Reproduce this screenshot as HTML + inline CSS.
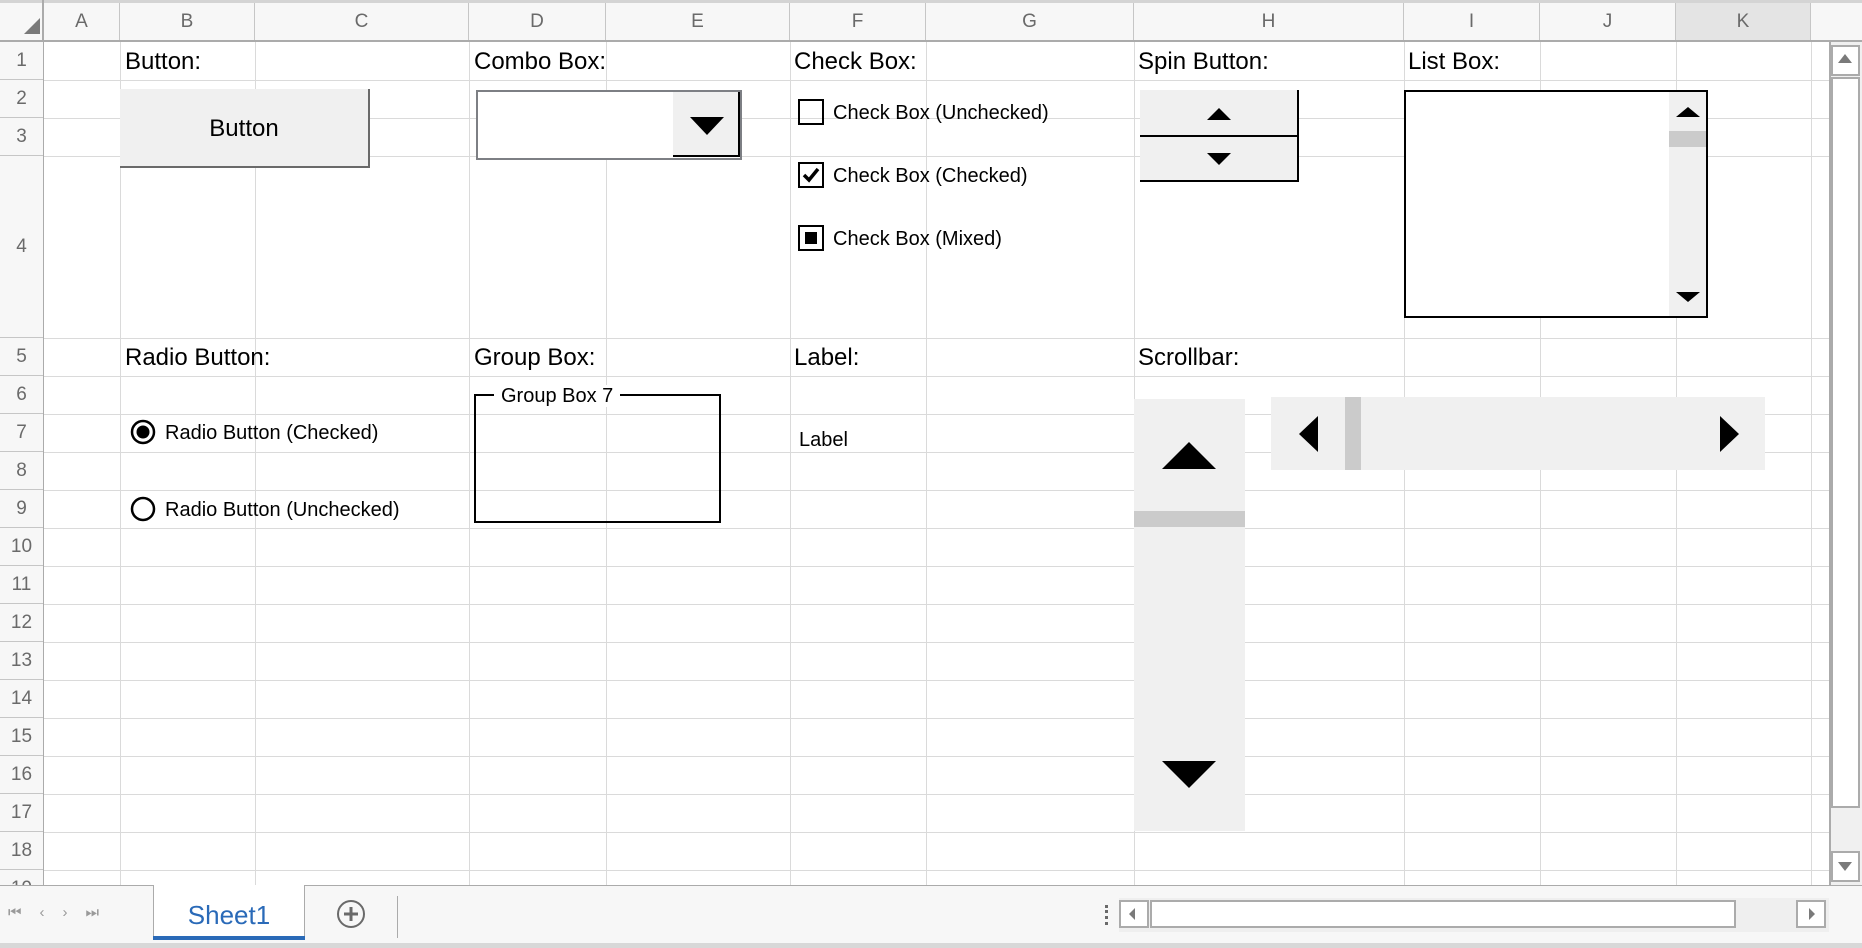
<!DOCTYPE html>
<html><head><meta charset="utf-8"><style>
*{margin:0;padding:0;box-sizing:border-box}
body{width:1862px;height:948px;position:relative;background:#fff;font-family:"Liberation Sans",sans-serif;overflow:hidden}
.a{position:absolute}
.v{position:absolute;top:42px;width:1px;height:843px;background:#dadada}
.h{position:absolute;left:44px;height:1px;width:1785px;background:#dadada}
.ch{position:absolute;top:0;height:41px;background:#f7f7f7;border-right:1px solid #c6c6c6;color:#6a6a6a;font-size:19px;text-align:center;line-height:44px}
.rh{position:absolute;left:0;width:43px;background:#f7f7f7;border-bottom:1px solid #c6c6c6;color:#6a6a6a;font-size:19px;text-align:center}
.lbl{position:absolute;font-size:24px;color:#000;line-height:26px}
.t{position:absolute;font-size:20px;color:#000;line-height:22px}
.tri{position:absolute;width:0;height:0}
</style></head><body>
<div class="v" style="left:120px"></div><div class="v" style="left:255px"></div><div class="v" style="left:469px"></div><div class="v" style="left:606px"></div><div class="v" style="left:790px"></div><div class="v" style="left:926px"></div><div class="v" style="left:1134px"></div><div class="v" style="left:1404px"></div><div class="v" style="left:1540px"></div><div class="v" style="left:1676px"></div><div class="v" style="left:1811px"></div>
<div class="h" style="top:80px"></div><div class="h" style="top:118px"></div><div class="h" style="top:156px"></div><div class="h" style="top:338px"></div><div class="h" style="top:376px"></div><div class="h" style="top:414px"></div><div class="h" style="top:452px"></div><div class="h" style="top:490px"></div><div class="h" style="top:528px"></div><div class="h" style="top:566px"></div><div class="h" style="top:604px"></div><div class="h" style="top:642px"></div><div class="h" style="top:680px"></div><div class="h" style="top:718px"></div><div class="h" style="top:756px"></div><div class="h" style="top:794px"></div><div class="h" style="top:832px"></div><div class="h" style="top:870px"></div>
<div class="a" style="left:0;top:0;width:1862px;height:3px;background:#d4d4d4"></div>
<div class="ch" style="left:0;width:44px;top:3px;height:38px"></div>
<div class="tri" style="left:24px;top:18px;border-left:16px solid transparent;border-bottom:16px solid #7a7a7a"></div>
<div class="ch" style="left:44px;width:76px;top:3px;height:38px;line-height:38px">A</div>
<div class="ch" style="left:120px;width:135px;top:3px;height:38px;line-height:38px">B</div>
<div class="ch" style="left:255px;width:214px;top:3px;height:38px;line-height:38px">C</div>
<div class="ch" style="left:469px;width:137px;top:3px;height:38px;line-height:38px">D</div>
<div class="ch" style="left:606px;width:184px;top:3px;height:38px;line-height:38px">E</div>
<div class="ch" style="left:790px;width:136px;top:3px;height:38px;line-height:38px">F</div>
<div class="ch" style="left:926px;width:208px;top:3px;height:38px;line-height:38px">G</div>
<div class="ch" style="left:1134px;width:270px;top:3px;height:38px;line-height:38px">H</div>
<div class="ch" style="left:1404px;width:136px;top:3px;height:38px;line-height:38px">I</div>
<div class="ch" style="left:1540px;width:136px;top:3px;height:38px;line-height:38px">J</div>
<div class="ch" style="left:1676px;width:135px;top:3px;height:38px;line-height:38px;background:#e4e4e4">K</div>
<div class="ch" style="left:1811px;width:51px;top:3px;height:38px;border-right:none"></div>
<div class="a" style="left:0;top:40px;width:1862px;height:2px;background:#ababab"></div>
<div class="a" style="left:42px;top:0;width:2px;height:885px;background:#ababab"></div>
<div class="rh" style="top:42px;height:38px;line-height:38px">1</div>
<div class="rh" style="top:80px;height:38px;line-height:38px">2</div>
<div class="rh" style="top:118px;height:38px;line-height:38px">3</div>
<div class="rh" style="top:156px;height:182px;line-height:182px">4</div>
<div class="rh" style="top:338px;height:38px;line-height:38px">5</div>
<div class="rh" style="top:376px;height:38px;line-height:38px">6</div>
<div class="rh" style="top:414px;height:38px;line-height:38px">7</div>
<div class="rh" style="top:452px;height:38px;line-height:38px">8</div>
<div class="rh" style="top:490px;height:38px;line-height:38px">9</div>
<div class="rh" style="top:528px;height:38px;line-height:38px">10</div>
<div class="rh" style="top:566px;height:38px;line-height:38px">11</div>
<div class="rh" style="top:604px;height:38px;line-height:38px">12</div>
<div class="rh" style="top:642px;height:38px;line-height:38px">13</div>
<div class="rh" style="top:680px;height:38px;line-height:38px">14</div>
<div class="rh" style="top:718px;height:38px;line-height:38px">15</div>
<div class="rh" style="top:756px;height:38px;line-height:38px">16</div>
<div class="rh" style="top:794px;height:38px;line-height:38px">17</div>
<div class="rh" style="top:832px;height:38px;line-height:38px">18</div>
<div class="rh" style="top:870px;height:38px;line-height:38px">19</div>
<div class="lbl" style="left:125px;top:49px">Button:</div>
<div class="lbl" style="left:474px;top:49px">Combo Box:</div>
<div class="lbl" style="left:794px;top:49px">Check Box:</div>
<div class="lbl" style="left:1138px;top:49px">Spin Button:</div>
<div class="lbl" style="left:1408px;top:49px">List Box:</div>
<div class="lbl" style="left:125px;top:345px">Radio Button:</div>
<div class="lbl" style="left:474px;top:345px">Group Box:</div>
<div class="lbl" style="left:794px;top:345px">Label:</div>
<div class="lbl" style="left:1138px;top:345px">Scrollbar:</div>
<div class="a" style="left:120px;top:89px;width:250px;height:79px;background:#f0f0f0;border-right:2px solid #6a6a6a;border-bottom:2px solid #6a6a6a;font-size:24px;text-align:center;line-height:80px">Button</div>
<div class="a" style="left:476px;top:90px;width:266px;height:70px;background:#fff;border:2px solid #7d7f84"></div>
<div class="a" style="left:673px;top:92px;width:67px;height:65px;background:#f0f0f0;border-bottom:2px solid #000;border-right:2px solid #000"></div>
<div class="tri" style="left:690px;top:117px;border-left:17px solid transparent;border-right:17px solid transparent;border-top:18px solid #000"></div>
<div class="a" style="left:798px;top:99px;width:26px;height:26px;border:2px solid #000"></div>
<div class="t" style="left:833px;top:102px">Check Box (Unchecked)</div>
<div class="a" style="left:798px;top:162px;width:26px;height:26px;border:2px solid #000"></div>
<svg class="a" style="left:798px;top:162px" width="26" height="26"><path d="M6 13 L11 18 L20 7" stroke="#000" stroke-width="3.5" fill="none"/></svg>
<div class="t" style="left:833px;top:165px">Check Box (Checked)</div>
<div class="a" style="left:798px;top:225px;width:26px;height:26px;border:2px solid #000"></div>
<div class="a" style="left:805px;top:232px;width:12px;height:12px;background:#000"></div>
<div class="t" style="left:833px;top:228px">Check Box (Mixed)</div>
<div class="a" style="left:1140px;top:90px;width:159px;height:92px;background:#f0f0f0;border-right:2px solid #000;border-bottom:2px solid #000"></div>
<div class="a" style="left:1140px;top:135px;width:159px;height:2px;background:#000"></div>
<div class="tri" style="left:1207px;top:108px;border-left:12px solid transparent;border-right:12px solid transparent;border-bottom:12px solid #000"></div>
<div class="tri" style="left:1207px;top:153px;border-left:12px solid transparent;border-right:12px solid transparent;border-top:12px solid #000"></div>
<div class="a" style="left:1404px;top:90px;width:304px;height:228px;border:2px solid #000;background:#fff"></div>
<div class="a" style="left:1669px;top:92px;width:37px;height:224px;background:#f0f0f0"></div>
<div class="a" style="left:1669px;top:131px;width:37px;height:16px;background:#cbcbcb"></div>
<div class="tri" style="left:1676px;top:107px;border-left:12px solid transparent;border-right:12px solid transparent;border-bottom:10px solid #000"></div>
<div class="tri" style="left:1676px;top:292px;border-left:12px solid transparent;border-right:12px solid transparent;border-top:10px solid #000"></div>
<svg class="a" style="left:129px;top:418px" width="30" height="110"><circle cx="14" cy="14" r="11" stroke="#000" stroke-width="2.5" fill="#fff"/><circle cx="14" cy="14" r="6.5" fill="#000"/><circle cx="14" cy="91" r="11" stroke="#000" stroke-width="2.5" fill="#fff"/></svg>
<div class="t" style="left:165px;top:422px">Radio Button (Checked)</div>
<div class="t" style="left:165px;top:499px">Radio Button (Unchecked)</div>
<div class="a" style="left:474px;top:394px;width:247px;height:129px;border:2px solid #000"></div>
<div class="t" style="left:494px;top:385px;background:#fff;padding:0 7px">Group Box 7</div>
<div class="t" style="left:799px;top:429px">Label</div>
<div class="a" style="left:1134px;top:399px;width:111px;height:432px;background:#f0f0f0"></div>
<div class="a" style="left:1134px;top:511px;width:111px;height:16px;background:#cbcbcb"></div>
<div class="tri" style="left:1162px;top:442px;border-left:27px solid transparent;border-right:27px solid transparent;border-bottom:27px solid #000"></div>
<div class="tri" style="left:1162px;top:761px;border-left:27px solid transparent;border-right:27px solid transparent;border-top:27px solid #000"></div>
<div class="a" style="left:1271px;top:397px;width:494px;height:73px;background:#f0f0f0"></div>
<div class="a" style="left:1345px;top:397px;width:16px;height:73px;background:#cbcbcb"></div>
<div class="tri" style="left:1299px;top:416px;border-top:18px solid transparent;border-bottom:18px solid transparent;border-right:19px solid #000"></div>
<div class="tri" style="left:1720px;top:416px;border-top:18px solid transparent;border-bottom:18px solid transparent;border-left:19px solid #000"></div>
<div class="a" style="left:1829px;top:42px;width:33px;height:843px;background:#f0f0f0;border-left:2px solid #ababab"></div>
<div class="a" style="left:1831px;top:45px;width:29px;height:31px;background:#fff;border:2px solid #ababab"></div>
<div class="tri" style="left:1838px;top:54px;border-left:7px solid transparent;border-right:7px solid transparent;border-bottom:9px solid #7a7a7a"></div>
<div class="a" style="left:1831px;top:77px;width:29px;height:731px;background:#fff;border:2px solid #ababab"></div>
<div class="a" style="left:1831px;top:851px;width:29px;height:31px;background:#fff;border:2px solid #ababab"></div>
<div class="tri" style="left:1838px;top:862px;border-left:7px solid transparent;border-right:7px solid transparent;border-top:9px solid #7a7a7a"></div>
<div class="a" style="left:0;top:885px;width:1862px;height:63px;background:#f7f7f7;border-top:1px solid #ababab"></div>
<div class="a" style="left:0;top:943px;width:1862px;height:5px;background:#d8d8d8"></div>
<div class="a" style="left:8px;top:904px;font-size:15px;color:#9a9a9a;letter-spacing:18px">⏮‹›⏭</div>
<div class="a" style="left:153px;top:885px;width:152px;height:55px;background:#fff;border-left:1px solid #ababab;border-right:1px solid #ababab;color:#2a6ab8;font-size:26px;text-align:center;line-height:60px">Sheet1</div>
<div class="a" style="left:153px;top:936px;width:152px;height:4px;background:#2a6ab8"></div>
<svg class="a" style="left:335px;top:898px" width="32" height="32"><circle cx="16" cy="16" r="13" stroke="#6a6a6a" stroke-width="2" fill="none"/><path d="M16 9v14M9 16h14" stroke="#6a6a6a" stroke-width="3"/></svg>
<div class="a" style="left:397px;top:896px;width:1px;height:42px;background:#ababab"></div>
<div class="a" style="left:1105px;top:905px;width:3px;height:20px;border-left:3px dotted #6a6a6a"></div>
<div class="a" style="left:1119px;top:898px;width:710px;height:34px;background:#efefef"></div>
<div class="a" style="left:1119px;top:900px;width:30px;height:28px;background:#fff;border:2px solid #ababab"></div>
<div class="tri" style="left:1129px;top:908px;border-top:6px solid transparent;border-bottom:6px solid transparent;border-right:6px solid #7a7a7a"></div>
<div class="a" style="left:1150px;top:900px;width:586px;height:28px;background:#fff;border:2px solid #ababab"></div>
<div class="a" style="left:1796px;top:900px;width:30px;height:28px;background:#fff;border:2px solid #ababab"></div>
<div class="tri" style="left:1809px;top:908px;border-top:6px solid transparent;border-bottom:6px solid transparent;border-left:6px solid #7a7a7a"></div>
</body></html>
